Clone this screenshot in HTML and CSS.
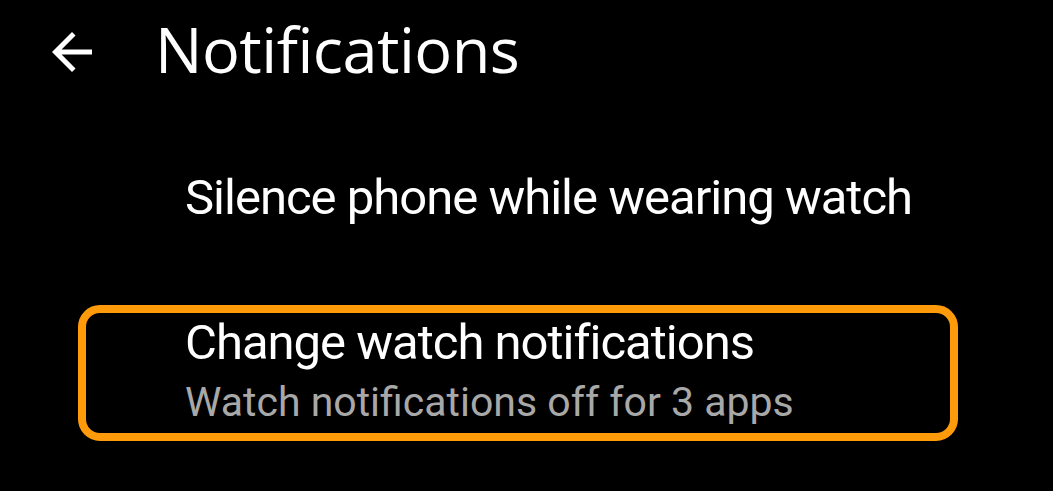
FILE: index.html
```html
<!DOCTYPE html>
<html lang="en">
<head>
<meta charset="UTF-8" />
<meta name="viewport" content="width=device-width, initial-scale=1" />
<title>Notifications</title>
<link rel="stylesheet" href="styles.css">
</head>
<body>
  <div class="screen">
    <!-- Top bar -->
    <div class="topbar">
      <svg class="back" viewBox="0 0 24 24" width="60" height="60">
        <path d="M20 11H7.83l5.59-5.59L12 4l-8 8 8 8 1.41-1.41L7.83 13H20v-2z" fill="#fff"/>
      </svg>
      <h1 class="title">Notifications</h1>
    </div>

    <!-- Settings list -->
    <div class="item">
      <div class="item-title">Silence phone while wearing watch</div>
    </div>

    <div class="item highlight">
      <div class="item-title">Change watch notifications</div>
      <div class="item-sub">Watch notifications off for 3 apps</div>
    </div>
  </div>
</body>
</html>
```

FILE: styles.css
```css
body { margin: 0; background: #000; color: #fff; font-family: Roboto, "Noto Sans", sans-serif; }
.screen { width: 1053px; height: 491px; overflow: hidden; }
.topbar { display: flex; align-items: center; height: 104px; padding-left: 42px; }
.back { flex: none; }
.title { margin: -8px 0 0 53px; font-family: "Open Sans", sans-serif; font-weight: 400; font-size: 63px; letter-spacing: -0.5px; }
.item { padding-left: 185px; }
.item-title { font-size: 49px; line-height: 60px; letter-spacing: -1px; padding-top: 64px; }
.item-sub { font-size: 41px; line-height: 58px; color: #a8a8a8; }
.highlight { margin: 77px 0 0 78px; width: 880px; height: 136px; box-sizing: border-box; border: 8px solid #ff9a0a; border-radius: 22px; padding-left: 99px; }
.highlight .item-title { padding-top: 0; }
```
